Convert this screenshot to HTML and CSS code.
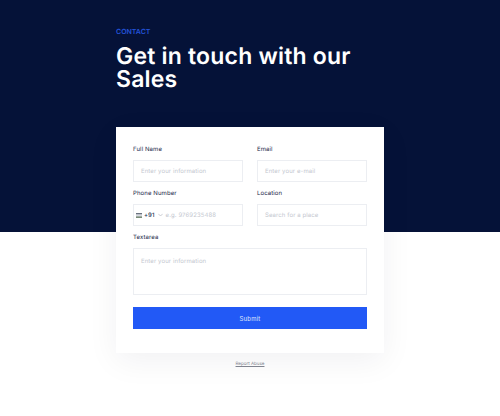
FILE: index.html
```html
<!DOCTYPE html>
<html lang="en">
<head>
<meta charset="utf-8">
<title>Contact</title>
<link rel="stylesheet" href="styles.css">
</head>
<body>
<div class="hero">
  <div class="hero-inner">
    <p class="eyebrow">CONTACT</p>
    <h1 class="title">Get in touch with our Sales</h1>
  </div>
</div>
<main class="main">
  <form class="card">
    <div class="grid">
      <div class="field">
        <label class="label">Full Name</label>
        <div class="input">Enter your information</div>
      </div>
      <div class="field">
        <label class="label">Email</label>
        <div class="input">Enter your e-mail</div>
      </div>
      <div class="field">
        <label class="label">Phone Number</label>
        <div class="input phone">
          <svg class="flag" width="6" height="5" viewBox="0 0 6 5"><rect width="6" height="1.5" fill="#6b7280"/><rect y="1.7" width="6" height="1.5" fill="#d8dbe2"/><rect y="3.4" width="6" height="1.5" fill="#6b7f6b"/></svg>
          <span class="code">+91</span>
          <svg class="chev" width="5" height="4" viewBox="0 0 5 4"><path d="M.3.8 2.5 3 4.7.8" fill="none" stroke="#b4b8c2" stroke-width=".7"/></svg>
          <span>e.g. 9769235488</span>
        </div>
      </div>
      <div class="field">
        <label class="label">Location</label>
        <div class="input">Search for a place</div>
      </div>
    </div>
    <div class="field area-field">
      <label class="label">Textarea</label>
      <div class="input area">Enter your information</div>
    </div>
    <button class="submit" type="button">Submit</button>
  </form>
  <a class="report" href="#">Report Abuse</a>
</main>
</body>
</html>
```
FILE: styles.css
```css
* { box-sizing: border-box; }
html, body { margin: 0; padding: 0; }
body {
  width: 500px;
  height: 416px;
  overflow: hidden;
  background: #fff;
  font-family: Inter, "Liberation Sans", sans-serif;
  color: #05123a;
  text-rendering: geometricPrecision;
}
.hero { height: 232px; background: #051238; padding: 27px 116px 0; }
.eyebrow { margin: 0; font-size: 7px; line-height: 9px; font-weight: 600; color: #2352d8; letter-spacing: 0; }
.title { margin: 9px 0 0; width: 250px; font-size: 23px; line-height: 23px; font-weight: 600; color: #fff; letter-spacing: .2px; }
.main { margin-top: -105px; display: flex; flex-direction: column; align-items: center; }
.card {
  width: 268px;
  height: 226px;
  background: #fff;
  padding: 19px 18px 0 17px;
  box-shadow: 0 8px 30px rgba(5, 18, 56, .06);
}
.grid { display: grid; grid-template-columns: 110px 110px; column-gap: 14px; row-gap: 8px; }
.label { display: block; font-size: 6px; line-height: 8px; color: #1a2548; letter-spacing: .1px; }
.input {
  margin-top: 6px;
  height: 22px;
  border: 1px solid #eceef2;
  padding: 0 7px;
  display: flex;
  align-items: center;
  font-size: 6px;
  color: #c4c7cf;
  letter-spacing: .1px;
}
.phone { padding-left: 2px; }
.flag { margin-right: 2px; }
.code { color: #273152; font-weight: 500; }
.chev { margin: 0 3px 0 3px; }
.area-field { margin-top: 8px; }
.area { height: 47px; align-items: flex-start; padding-top: 9px; width: 234px; }
.submit {
  display: block;
  margin-top: 12px;
  width: 234px;
  height: 22px;
  border: 0;
  padding: 0;
  background: #2259f6;
  color: #dfe6fb;
  font: 6px Inter, "Liberation Sans", sans-serif;
  letter-spacing: .2px;
}
.report { margin-top: 9px; font-size: 4.5px; line-height: 6px; color: #80848f; text-decoration: underline; }
```
